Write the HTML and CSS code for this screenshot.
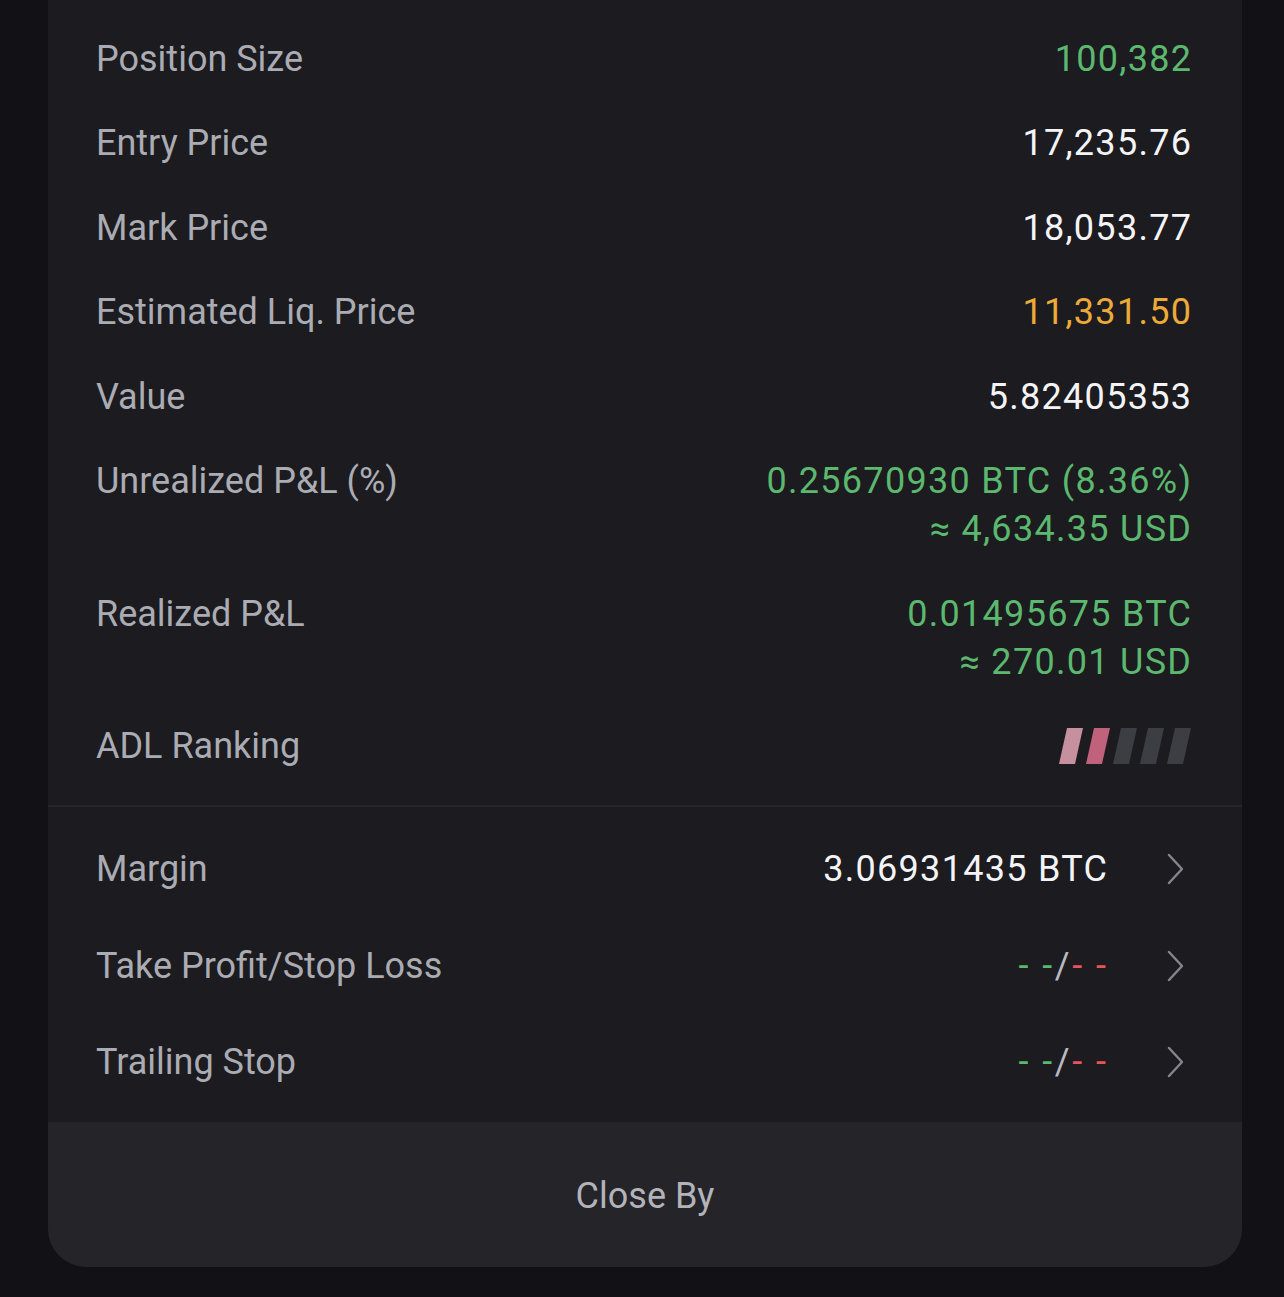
FILE: index.html
```html
<!DOCTYPE html>
<html>
<head>
<meta charset="utf-8">
<link rel="stylesheet" href="styles.css">
</head>
<body>
<div class="sheet">
  <div class="details">
    <div class="row"><span class="label">Position Size</span><span class="val green">100,382</span></div>
    <div class="row"><span class="label">Entry Price</span><span class="val">17,235.76</span></div>
    <div class="row"><span class="label">Mark Price</span><span class="val">18,053.77</span></div>
    <div class="row"><span class="label">Estimated Liq. Price</span><span class="val orange">11,331.50</span></div>
    <div class="row"><span class="label">Value</span><span class="val">5.82405353</span></div>
    <div class="row"><span class="label">Unrealized P&amp;L (%)</span><span class="val green multi"><span>0.25670930 BTC (8.36%)</span><span>≈ 4,634.35 USD</span></span></div>
    <div class="row"><span class="label">Realized P&amp;L</span><span class="val green multi"><span>0.01495675 BTC</span><span>≈ 270.01 USD</span></span></div>
    <div class="row"><span class="label">ADL Ranking</span>
      <svg class="adl" width="134" height="36" viewBox="0 0 134 36">
        <polygon points="0,36 8,0 24,0 16,36" fill="#c6909f"/>
        <polygon points="27,36 35,0 51,0 43,36" fill="#c0627c"/>
        <polygon points="54,36 62,0 78,0 70,36" fill="#3d3e43"/>
        <polygon points="81,36 89,0 105,0 97,36" fill="#3d3e43"/>
        <polygon points="108,36 116,0 132,0 124,36" fill="#3d3e43"/>
      </svg>
    </div>
  </div>
  <div class="sep"></div>
  <div class="actions">
    <div class="arow"><span class="label">Margin</span><span class="aright"><span class="val">3.06931435 BTC</span><svg class="chev" width="16" height="32" viewBox="0 0 16 32"><polyline points="2,2 15,16 2,30" fill="none" stroke="#85858c" stroke-width="2.4" stroke-linecap="round" stroke-linejoin="round"/></svg></span></div>
    <div class="arow"><span class="label">Take Profit/Stop Loss</span><span class="aright"><span class="val dash"><span class="green">- -</span><span class="slash">/</span><span class="red">- -</span></span><svg class="chev" width="16" height="32" viewBox="0 0 16 32"><polyline points="2,2 15,16 2,30" fill="none" stroke="#85858c" stroke-width="2.4" stroke-linecap="round" stroke-linejoin="round"/></svg></span></div>
    <div class="arow"><span class="label">Trailing Stop</span><span class="aright"><span class="val dash"><span class="green">- -</span><span class="slash">/</span><span class="red">- -</span></span><svg class="chev" width="16" height="32" viewBox="0 0 16 32"><polyline points="2,2 15,16 2,30" fill="none" stroke="#85858c" stroke-width="2.4" stroke-linecap="round" stroke-linejoin="round"/></svg></span></div>
  </div>
  <div class="footer">Close By</div>
</div>
</body>
</html>
```
FILE: styles.css
```css
html, body {
  margin: 0;
  padding: 0;
  background: #111116;
}
body {
  font-family: Roboto, "Liberation Sans", sans-serif;
  font-size: 36px;
  color: #f2f2f4;
  height: 1297px;
  overflow: hidden;
}
.sheet {
  margin-left: 48px;
  width: 1194px;
  background: #1b1b20;
  border-radius: 0 0 38px 38px;
  overflow: hidden;
}
.details {
  padding: 16.5px 51px 16.5px 48px;
}
.row {
  display: flex;
  justify-content: space-between;
  align-items: flex-start;
  padding: 18.25px 0;
  line-height: 48px;
}
.label {
  color: #abacb3;
}
.val {
  color: #f4f4f6;
  text-align: right;
  letter-spacing: 1.3px;
  margin-right: -1.3px;
}
.multi {
  display: flex;
  flex-direction: column;
  align-items: flex-end;
}
.green { color: #5cb86e; }
.orange { color: #eeaa38; }
.red { color: #e5545a; }
.slash { color: #b9b9bf; }
.adl {
  margin-top: 6px;
  margin-right: -2px;
  display: block;
}
.sep {
  height: 2px;
  background: #25252a;
}
.actions {
  padding: 14px 0 11px;
}
.arow {
  display: flex;
  justify-content: space-between;
  align-items: center;
  padding: 24.25px 59px 24.25px 48px;
  line-height: 48px;
}
.aright {
  display: flex;
  align-items: center;
  gap: 60px;
}
.chev {
  display: block;
}
.val.dash {
  letter-spacing: 2.5px;
  margin-right: -1.5px;
}
.footer {
  height: 142px;
  padding-top: 3px;
  background: #242429;
  display: flex;
  align-items: center;
  justify-content: center;
  color: #b3b3ba;
}
```
